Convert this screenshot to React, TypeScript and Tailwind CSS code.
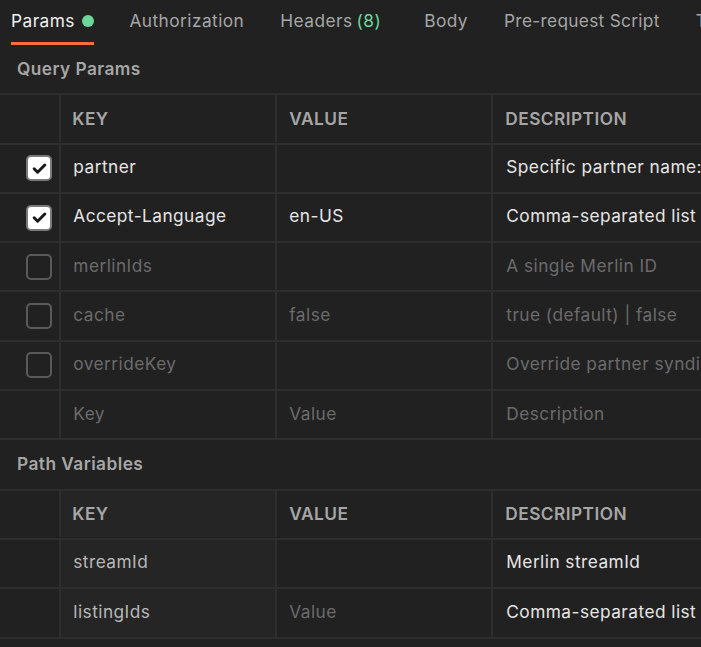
import React from "react";

type Row = {
  check: "on" | "off" | "none";
  k: string;
  v: string;
  d: string;
  kTone: "on" | "off" | "ph" | "ro";
  vTone: "on" | "off" | "ph";
  dTone: "on" | "off" | "ph";
};

const tone = {
  on: "text-[#e6e6e6]",
  off: "text-[#6b6b6b]",
  ph: "text-[#6b6b6b]",
  ro: "text-[#b8b8b8]",
};

const query: Row[] = [
  { check: "on", k: "partner", v: "", d: "Specific partner name: syndication partner", kTone: "on", vTone: "on", dTone: "on" },
  { check: "on", k: "Accept-Language", v: "en-US", d: "Comma-separated list of languages", kTone: "on", vTone: "on", dTone: "on" },
  { check: "off", k: "merlinIds", v: "", d: "A single Merlin ID", kTone: "off", vTone: "off", dTone: "off" },
  { check: "off", k: "cache", v: "false", d: "true (default) | false", kTone: "off", vTone: "off", dTone: "off" },
  { check: "off", k: "overrideKey", v: "", d: "Override partner syndication key", kTone: "off", vTone: "off", dTone: "off" },
  { check: "none", k: "Key", v: "Value", d: "Description", kTone: "ph", vTone: "ph", dTone: "ph" },
];

const path: Row[] = [
  { check: "none", k: "streamId", v: "", d: "Merlin streamId", kTone: "ro", vTone: "on", dTone: "on" },
  { check: "none", k: "listingIds", v: "Value", d: "Comma-separated list of listing ids", kTone: "ro", vTone: "ph", dTone: "on" },
];

function Check({ state }: { state: Row["check"] }) {
  if (state === "none") return null;
  if (state === "on")
    return (
      <div className="w-[26px] h-[26px] rounded-[5px] bg-white border-2 border-[#7a7a7a] flex items-center justify-center">
        <svg width="17" height="17" viewBox="0 0 16 16" fill="none">
          <path d="M3 8.3l3.2 3.2L13 4.7" stroke="#1a1a1a" strokeWidth="2.8" strokeLinecap="round" strokeLinejoin="round" />
        </svg>
      </div>
    );
  return <div className="w-[26px] h-[26px] rounded-[5px] border-2 border-[#5a5a5a]" />;
}

function Table({ rows, roKey }: { rows: Row[]; roKey?: boolean }) {
  const line = "border-[#2e2e2e]";
  return (
    <div className={`w-[900px] border-t-2 ${line}`}>
      <div className={`flex h-[49.3px] border-b-2 ${line} text-[#a6a6a6] font-semibold pb-[1px]`}>
        <div className="w-[59.3px] shrink-0" />
        <div className={`w-[216px] shrink-0 border-l-2 ${line} pl-[11px] flex items-center ${roKey ? "bg-[#252525]" : ""}`}>KEY</div>
        <div className={`w-[216px] shrink-0 border-l-2 ${line} pl-[12px] flex items-center`}>VALUE</div>
        <div className={`flex-1 border-l-2 ${line} pl-[12px] flex items-center`}>DESCRIPTION</div>
      </div>
      {rows.map((r, i) => (
        <div key={i} className={`flex h-[49.3px] border-b-2 ${line}`}>
          <div className="w-[59.3px] shrink-0 flex items-center justify-end pr-[7px]">
            <Check state={r.check} />
          </div>
          <div className={`w-[216px] shrink-0 border-l-2 ${line} pl-[12px] pb-[3px] flex items-center ${tone[r.kTone]} ${roKey ? "bg-[#252525]" : ""}`}>{r.k}</div>
          <div className={`w-[216px] shrink-0 border-l-2 ${line} pl-[12px] pb-[3px] flex items-center ${tone[r.vTone]}`}>{r.v}</div>
          <div className={`flex-1 border-l-2 ${line} pl-[13px] pb-[3px] flex items-center whitespace-nowrap ${tone[r.dTone]}`}>{r.d}</div>
        </div>
      ))}
    </div>
  );
}

export default function App() {
  return (
    <div
      className="w-[701px] h-[647px] overflow-hidden bg-[#212121] text-[17.3px] leading-none tracking-[0.45px]"
      style={{ fontFamily: "Inter, 'Noto Sans', sans-serif" }}
    >
      <div className="h-[45px] flex items-stretch pl-[11px] whitespace-nowrap">
        <div className="relative flex items-center pb-[3px] text-[#f0f0f0]">
          <span>Params</span>
          <span className="ml-[7px] w-[12.5px] h-[12.5px] rounded-full bg-[#6bd89a]" />
          <div className="absolute left-0 right-0 bottom-0 h-[3px] bg-[#ff6c37]" />
        </div>
        <div className="ml-[35px] flex items-center pb-[3px] text-[#a6a6a6]">Authorization</div>
        <div className="ml-[36px] flex items-center pb-[3px] text-[#a6a6a6]">
          Headers<span className="ml-[4px] text-[#6bd89a]">(8)</span>
        </div>
        <div className="ml-[43px] flex items-center pb-[3px] text-[#a6a6a6]">Body</div>
        <div className="ml-[36px] flex items-center pb-[3px] tracking-[0.3px] text-[#a6a6a6]">Pre-request Script</div>
        <div className="ml-[36px] flex items-center pb-[3px] text-[#a6a6a6]">Tests</div>
      </div>
      <div className="h-[48.3px] flex items-center pl-[17px] pb-[2px] font-semibold text-[#a6a6a6]">Query Params</div>
      <Table rows={query} />
      <div className="h-[48.3px] flex items-center pl-[17px] pb-[2px] font-semibold text-[#a6a6a6]">Path Variables</div>
      <Table rows={path} roKey />
    </div>
  );
}
